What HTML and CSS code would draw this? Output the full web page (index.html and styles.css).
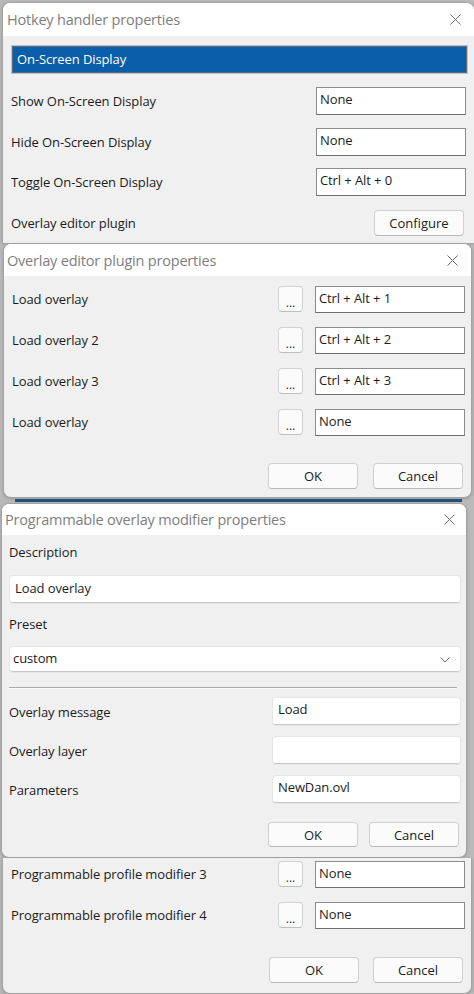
FILE: index.html
```html
<!DOCTYPE html>
<html>
<head>
<meta charset="utf-8">
<link rel="stylesheet" href="styles.css">
</head>
<body>
<div class="desk">
  <section class="win w1">
    <header class="tbar">
      <span class="ttl">Hotkey handler properties</span>
      <svg class="xic" viewBox="0 0 11 11"><path d="M0.5 0.5L10.5 10.5M10.5 0.5L0.5 10.5"/></svg>
    </header>
    <div class="body b1">
      <div class="sel">On-Screen Display</div>
      <div class="row"><span class="lbl">Show On-Screen Display</span><div class="inp">None</div></div>
      <div class="row"><span class="lbl">Hide On-Screen Display</span><div class="inp">None</div></div>
      <div class="row"><span class="lbl">Toggle On-Screen Display</span><div class="inp">Ctrl + Alt + 0</div></div>
      <div class="row"><span class="lbl">Overlay editor plugin</span><button class="btn cfg">Configure</button></div>
    </div>
  </section>

  <section class="win w2">
    <header class="tbar">
      <span class="ttl">Overlay editor plugin properties</span>
      <svg class="xic" viewBox="0 0 11 11"><path d="M0.5 0.5L10.5 10.5M10.5 0.5L0.5 10.5"/></svg>
    </header>
    <div class="body b2">
      <div class="row"><span class="lbl">Load overlay</span><div class="ctl"><button class="dots">...</button><div class="inp">Ctrl + Alt + 1</div></div></div>
      <div class="row"><span class="lbl">Load overlay 2</span><div class="ctl"><button class="dots">...</button><div class="inp">Ctrl + Alt + 2</div></div></div>
      <div class="row"><span class="lbl">Load overlay 3</span><div class="ctl"><button class="dots">...</button><div class="inp">Ctrl + Alt + 3</div></div></div>
      <div class="row"><span class="lbl">Load overlay</span><div class="ctl"><button class="dots">...</button><div class="inp">None</div></div></div>
      <div class="foot"><button class="btn">OK</button><button class="btn">Cancel</button></div>
    </div>
  </section>

  <div class="strip"><span class="bline"></span></div>

  <section class="win w3">
    <header class="tbar">
      <span class="ttl">Programmable overlay modifier properties</span>
      <svg class="xic" viewBox="0 0 11 11"><path d="M0.5 0.5L10.5 10.5M10.5 0.5L0.5 10.5"/></svg>
    </header>
    <div class="body b3">
      <div class="cap">Description</div>
      <div class="fld wide">Load overlay</div>
      <div class="cap cap2">Preset</div>
      <div class="fld wide combo"><span>custom</span><svg class="chev" viewBox="0 0 10 6"><path d="M0.5 0.5L5 5L9.5 0.5"/></svg></div>
      <div class="sep"></div>
      <div class="row3 r31"><span class="lbl">Overlay message</span><div class="fld short">Load</div></div>
      <div class="row3"><span class="lbl">Overlay layer</span><div class="fld short"></div></div>
      <div class="row3"><span class="lbl">Parameters</span><div class="fld short">NewDan.ovl</div></div>
      <div class="foot f3"><button class="btn">OK</button><button class="btn">Cancel</button></div>
    </div>
  </section>

  <section class="win w4">
    <div class="body b4">
      <div class="row"><span class="lbl">Programmable profile modifier 3</span><div class="ctl"><button class="dots">...</button><div class="inp">None</div></div></div>
      <div class="row"><span class="lbl">Programmable profile modifier 4</span><div class="ctl"><button class="dots">...</button><div class="inp">None</div></div></div>
      <div class="foot f4"><button class="btn">OK</button><button class="btn">Cancel</button></div>
    </div>
  </section>
</div>
</body>
</html>
```
FILE: styles.css
```css
* { box-sizing: border-box; }
html, body { margin: 0; padding: 0; }
body {
  background: #b9b9b9;
  font-family: "Open Sans", "Noto Sans", sans-serif;
  font-size: 13px;
  letter-spacing: -0.1px;
  color: #1c1c1c;
  width: 474px;
  height: 994px;
  overflow: hidden;
}
.desk { display: flex; flex-direction: column; padding-top: 2px; }

.win {
  background: #f0f0f0;
  border: 1px solid #a3a3a3;
  border-radius: 8px;
  overflow: hidden;
  box-shadow: 0 1px 3px rgba(0,0,0,0.18);
}
.w1 { margin-left: 2px; width: 472px; height: 241px; border-bottom: none; border-radius: 8px 8px 0 0; border-right: none; }
.w2 { margin-left: 3px; width: 469px; height: 255px; }
.w3 { margin-left: 1px; width: 466px; height: 355px; }
.w4 { margin-left: 2px; width: 470px; height: 136px; border-top: none; border-radius: 0 0 8px 8px; }

.tbar {
  height: 32px;
  background: #ffffff;
  display: flex;
  align-items: center;
  justify-content: space-between;
  padding: 0 14px 0 4px;
}
.w1 .tbar { height: 33px; padding-right: 13px; }
.w2 .tbar { padding-left: 3px; padding-right: 13px; }
.w3 .tbar { padding-left: 3px; padding-right: 11px; height: 31px; }
.ttl { font-size: 14.5px; color: #7e7e7e; letter-spacing: -0.2px; }
.xic { width: 11px; height: 11px; }
.xic path { stroke: #6b6b6b; stroke-width: 1; fill: none; }

.body { display: flex; flex-direction: column; }

.b1 { padding: 10px 0 0 0; }
.sel {
  margin: 0 7px 0 9px;
  height: 27px;
  background: #0b5eaa;
  border: 1px solid #5b6b7b;
  outline: 1px solid #b9c2cc;
  color: #ffffff;
  padding: 3px 0 0 4px;
  font-size: 13px;
}
.row {
  display: flex;
  align-items: center;
  justify-content: space-between;
  height: 28px;
  margin-top: 12.7px;
}
.b1 .sel + .row { margin-top: 14px; }
.lbl { padding-left: 8px; white-space: nowrap; }
.b1 .row { padding-right: 8px; }
.b1 .row:last-child { padding-right: 10px; }

.inp {
  width: 150px;
  height: 28px;
  background: #ffffff;
  border: 1px solid #8c8c8c;
  border-bottom-color: #6e6e6e;
  padding: 1px 0 0 3px;
  line-height: 20px;
}
.ctl { display: flex; align-items: center; gap: 12px; }
.dots {
  width: 25px;
  height: 26px;
  background: #fbfbfb;
  border: 1px solid #d2d2d2;
  border-bottom-color: #bdbdbd;
  border-radius: 4px;
  font: inherit;
  font-size: 12px;
  line-height: 12px;
  padding: 7px 0 0 0;
  color: #333;
}
.btn {
  width: 90px;
  height: 26px;
  background: #fbfbfb;
  border: 1px solid #d0d0d0;
  border-bottom-color: #b8b8b8;
  border-radius: 4px;
  font: inherit;
  font-size: 13px;
  color: #1c1c1c;
  padding: 0;
}
.cfg { height: 26px; }

.b2 { padding: 9px 0 0 0; }
.b2 .row { margin-top: 13px; padding-right: 6px; height: 28px; }
.b2 .row:first-child { margin-top: 0; }
.b2 .inp { height: 27px; }
.foot { display: flex; justify-content: flex-end; gap: 15px; }
.b2 .foot { margin-top: 27px; padding-right: 8px; }

.strip {
  height: 5px;
  display: flex;
  align-items: center;
  padding: 0 12px 0 15px;
}
.bline { display: block; flex: 1; height: 3px; background: #23517d; }

.b3 { padding: 7px 6px 0 8px; }
.cap { height: 20px; line-height: 20px; margin-left: -1px; }
.cap2 { margin-top: 11px; }
.fld {
  background: #ffffff;
  border-radius: 3px;
  border-bottom: 1px solid #c9c9c9;
  box-shadow: 0 0 0 1px #e6e6e6;
  padding: 2px 0 0 5px;
  line-height: 20px;
}
.wide { height: 27px; margin-top: 14px; }
.combo {
  margin-top: 13px;
  height: 25px;
  display: flex;
  justify-content: space-between;
  padding: 1px 10px 0 3px;
}
.chev { width: 10px; height: 6px; margin-top: 9px; }
.chev path { stroke: #777; stroke-width: 1; fill: none; }
.sep { margin: 15px 3px 0 -1px; height: 2px; border-top: 1px solid #a8a8a8; border-bottom: 1px solid #fafafa; }
.row3 {
  display: flex;
  justify-content: space-between;
  align-items: center;
  margin-top: 12px;
  height: 27px;
}
.r31 { margin-top: 9px; }
.row3 .lbl { padding-left: 0; margin-left: -1px; }
.short { width: 187px; height: 27px; padding-top: 1px; }
.f3 { margin-top: 19px; gap: 11px; padding-right: 1px; }
.f3 .btn { height: 25px; }

.b4 { padding: 2px 0 0 0; }
.b4 .row { margin-top: 13px; padding-right: 6px; }
.b4 .row:first-child { margin-top: 0; }
.b4 .inp { height: 27px; }
.f4 { margin-top: 28px; padding-right: 8px; gap: 14px; }
```
